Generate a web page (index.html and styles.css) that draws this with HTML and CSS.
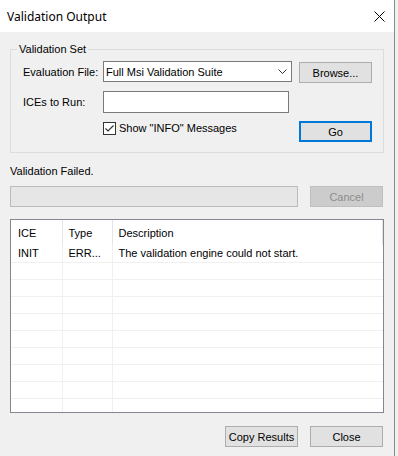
FILE: index.html
```html
<!DOCTYPE html>
<html lang="en">
<head>
    <meta charset="UTF-8">
    <meta name="viewport" content="width=device-width, initial-scale=1.0">
    <title>Validation Output</title>
    <link rel="stylesheet" href="styles.css">
</head>
<body>
    <div class="window">
        <div class="titlebar">
            <span class="title">Validation Output</span>
            <svg class="close-x" width="11" height="11" viewBox="0 0 11 11">
                <path d="M0.5 0.5 L10.5 10.5 M10.5 0.5 L0.5 10.5" stroke="#000" stroke-width="1" fill="none"/>
            </svg>
        </div>
        <div class="content">
            <fieldset class="group">
                <legend>Validation Set</legend>
                <div class="group-grid">
                    <span class="field-label">Evaluation File:</span>
                    <div class="combo">
                        <span>Full Msi Validation Suite</span>
                        <svg width="9" height="5" viewBox="0 0 9 5">
                            <path d="M0.5 0.5 L4.5 4.5 L8.5 0.5" stroke="#333" stroke-width="1" fill="none"/>
                        </svg>
                    </div>
                    <button class="btn browse">Browse...</button>

                    <span class="field-label">ICEs to Run:</span>
                    <div class="textbox"></div>
                    <span></span>

                    <span></span>
                    <label class="check">
                        <span class="box">
                            <svg width="11" height="11" viewBox="0 0 11 11">
                                <path d="M1.5 5.5 L4 8 L9.5 2.5" stroke="#333" stroke-width="1.2" fill="none"/>
                            </svg>
                        </span>
                        Show "INFO" Messages
                    </label>
                    <button class="btn go">Go</button>
                </div>
            </fieldset>

            <div class="status">Validation Failed.</div>
            <div class="progress-row">
                <div class="progress"></div>
                <button class="btn disabled">Cancel</button>
            </div>

            <div class="listview">
                <table class="results">
                    <colgroup>
                        <col style="width: 51px">
                        <col style="width: 50px">
                        <col>
                    </colgroup>
                    <thead>
                        <tr><th>ICE</th><th>Type</th><th>Description</th></tr>
                    </thead>
                    <tbody>
                        <tr><td>INIT</td><td>ERR...</td><td>The validation engine could not start.</td></tr>
                        <tr><td></td><td></td><td></td></tr>
                        <tr><td></td><td></td><td></td></tr>
                        <tr><td></td><td></td><td></td></tr>
                        <tr><td></td><td></td><td></td></tr>
                        <tr><td></td><td></td><td></td></tr>
                        <tr><td></td><td></td><td></td></tr>
                        <tr><td></td><td></td><td></td></tr>
                        <tr><td></td><td></td><td></td></tr>
                        <tr><td></td><td></td><td></td></tr>
                    </tbody>
                </table>
            </div>

            <div class="actions">
                <button class="btn">Copy Results</button>
                <button class="btn">Close</button>
            </div>
        </div>
    </div>
</body>
</html>
```

FILE: styles.css
```css
* {
    box-sizing: border-box;
}

body {
    margin: 0;
    background: #f0f0f0;
    font-family: "Liberation Sans", Arial, sans-serif;
    font-size: 11px;
    color: #000;
}

.window {
    width: 395px;
    height: 456px;
    background: #f0f0f0;
    border-right: 1px solid #8b8b8b;
    overflow: hidden;
}

.titlebar {
    height: 32px;
    background: #fff;
    display: flex;
    align-items: center;
    justify-content: space-between;
    padding: 1px 9px 0 7px;
}

.title {
    font-family: "Noto Sans", "Open Sans", sans-serif;
    font-size: 12px;
}

.close-x {
    margin-top: -1px;
}

.content {
    padding: 11px 10px 0 10px;
}

/* group box */
.group {
    margin: 0;
    padding: 0 0 10px 12px;
    border: 1px solid #dcdcdc;
}

.group legend {
    margin-left: -6px;
    padding: 0 2px;
    line-height: 13px;
}

.group-grid {
    display: grid;
    grid-template-columns: 73px 189px 73px;
    column-gap: 7px;
    row-gap: 8px;
    padding-top: 5px;
}

.field-label {
    align-self: center;
    white-space: nowrap;
}

.combo {
    height: 21px;
    background: #fff;
    border: 1px solid #7a7a7a;
    display: flex;
    align-items: center;
    justify-content: space-between;
    padding: 0 4px 0 2px;
}

.textbox {
    width: 186px;
    height: 22px;
    background: #fff;
    border: 1px solid #7a7a7a;
}

.check {
    display: flex;
    align-items: center;
    gap: 3px;
    height: 13px;
    margin-top: 1px;
    line-height: 13px;
    white-space: nowrap;
}

.box {
    width: 13px;
    height: 13px;
    border: 1px solid #333;
    background: #fff;
    display: flex;
}

.btn {
    width: 73px;
    height: 21px;
    padding: 0;
    background: #e1e1e1;
    border: 1px solid #adadad;
    font: inherit;
    color: #000;
}

.browse {
    margin-top: 1px;
}

.go {
    border: 2px solid #0078d7;
}

.btn.disabled {
    background: #cccccc;
    border-color: #bfbfbf;
    color: #8d8d8d;
}

.status {
    margin-top: 12px;
    line-height: 13px;
}

.progress-row {
    display: flex;
    justify-content: space-between;
    margin-top: 8px;
    padding-right: 1px;
}

.progress {
    width: 288px;
    height: 21px;
    background: #e6e6e6;
    border: 1px solid #bcbcbc;
}

/* list view */
.listview {
    margin-top: 12px;
    height: 194px;
    background: #fff;
    border: 1px solid #828790;
    overflow: hidden;
}

.results {
    width: 372px;
    border-collapse: collapse;
    table-layout: fixed;
}

.results th {
    height: 25px;
    padding: 1px 0 0 6px;
    text-align: left;
    font-weight: normal;
    border-right: 1px solid #e5e5e5;
}

.results th:first-child,
.results td:first-child {
    padding-left: 7px;
}

.results td {
    height: 17px;
    padding: 1px 0 0 6px;
    line-height: 13px;
    white-space: nowrap;
    border-bottom: 1px solid #f0f0f0;
    border-right: 1px solid #f0f0f0;
}

.results td:last-child {
    border-right-color: #fff;
}

.actions {
    display: flex;
    justify-content: flex-end;
    gap: 12px;
    margin-top: 13px;
    padding-right: 1px;
}
```
